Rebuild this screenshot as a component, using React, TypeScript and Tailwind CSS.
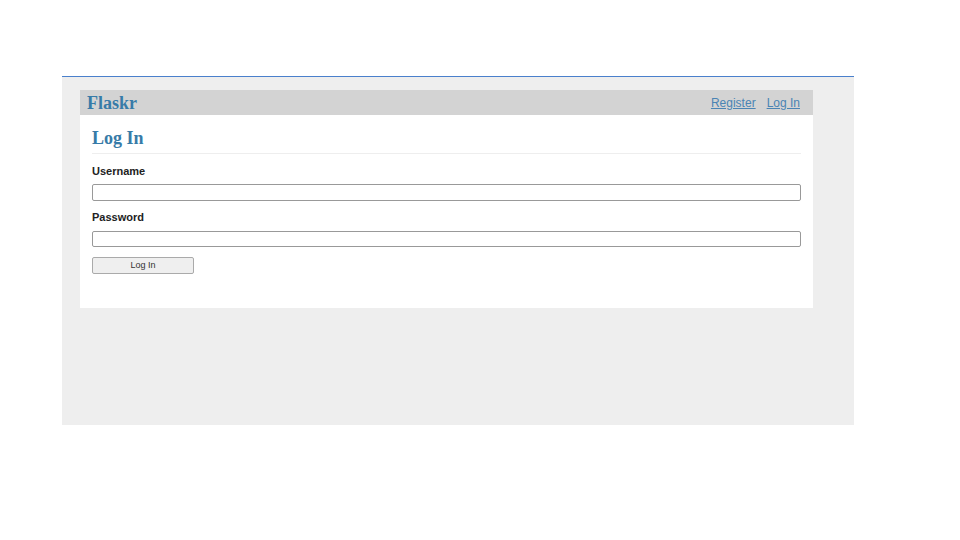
export default function App() {
  return (
    <div className="h-[540px] w-[960px] bg-white pl-[62px] pt-[76px] font-['Liberation_Sans',Arial,sans-serif]">
      <div className="h-[349px] w-[792px] border-t-[1.5px] border-t-[#4a80cc] bg-[#eeeeee] pl-[18px] pt-[13px]">
        <div className="w-[733px] bg-white pb-[34px]">
          <nav className="flex h-[25px] items-center justify-between bg-[#d3d3d3] pl-[7px] pr-[13px]">
            <h1 className="font-['Liberation_Serif',serif] text-[18px] font-bold leading-none text-[#377ba8]">
              Flaskr
            </h1>
            <ul className="flex gap-[11px] text-[12px] text-[#4a84b4]">
              <li>
                <a href="#" className="underline">Register</a>
              </li>
              <li>
                <a href="#" className="underline">Log In</a>
              </li>
            </ul>
          </nav>
          <section className="px-[12px] pt-[12px]">
            <header className="border-b border-[#eeeeee] pb-[4px]">
              <h2 className="font-['Liberation_Serif',serif] text-[18px] font-bold leading-[22px] text-[#377ba8]">
                Log In
              </h2>
            </header>
            <form className="flex flex-col">
              <label className="mt-[10px] text-[11px] font-bold leading-[14px] text-[#222]">
                Username
              </label>
              <input className="mt-[6px] h-[17px] w-full rounded-[2px] border border-[#999] bg-white" />
              <label className="mt-[9px] text-[11px] font-bold leading-[14px] text-[#222]">
                Password
              </label>
              <input
                type="password"
                className="mt-[7px] h-[16px] w-full rounded-[2px] border border-[#999] bg-white"
              />
              <button
                type="button"
                className="mt-[10px] h-[17px] w-[102px] rounded-[2px] border border-[#aaa] bg-[#efefef] text-[9px] leading-none text-[#333]"
              >
                Log In
              </button>
            </form>
          </section>
        </div>
      </div>
    </div>
  );
}
